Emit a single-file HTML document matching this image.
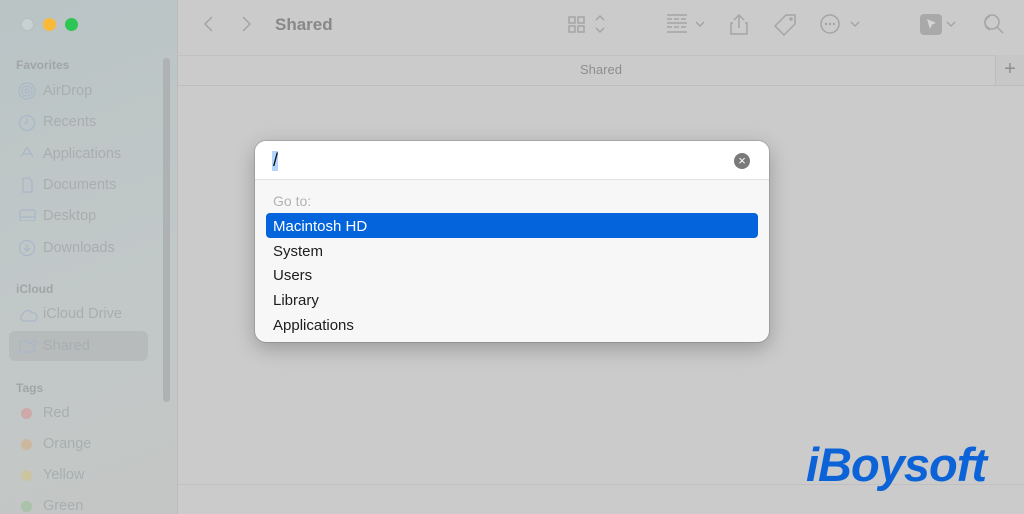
<!DOCTYPE html>
<html><head><meta charset="utf-8"><style>
*{margin:0;padding:0;box-sizing:border-box}
body{width:1024px;height:514px;overflow:hidden;background:#cacbca;font-family:"Liberation Sans",sans-serif;position:relative}
.sb{position:absolute;left:0;top:0;width:177px;height:514px;background:linear-gradient(160deg,#bac4c5,#c2c8c8 60%,#c4c6c5);}
.dot{position:absolute;top:18px;width:13px;height:13px;border-radius:50%}
.hd{position:absolute;left:16px;font-size:12px;font-weight:bold;color:#a0a5a6}
.it{position:absolute;left:43px;font-size:14.5px;color:#a8aeaf}
.ic{position:absolute;left:18px}
.tag{position:absolute;left:21px;width:11px;height:11px;border-radius:50%}
.t{position:absolute;color:#999}
.dlg{position:absolute;left:255px;top:141px;width:514px;height:201px;border-radius:11px;background:#f7f7f7;box-shadow:0 6px 20px rgba(0,0,0,.25),0 0 0 1px rgba(0,0,0,.12);overflow:hidden}
.row{position:absolute;left:18px;font-size:15px;color:#1d1d1d}
</style></head><body>
<div class="sb">
<div class="dot" style="left:21px;background:#c9d2d3;border:1px solid #b5bfc0"></div>
<div class="dot" style="left:43px;background:#f9b93a"></div>
<div class="dot" style="left:65px;background:#2dc553"></div>
<div class="hd" style="top:58px">Favorites</div>
<div class="it" style="top:83px">AirDrop</div>
<div class="it" style="top:114px">Recents</div>
<div class="it" style="top:146px">Applications</div>
<div class="it" style="top:177px">Documents</div>
<div class="it" style="top:208px">Desktop</div>
<div class="it" style="top:240px">Downloads</div>
<svg class="ic" style="top:81px" width="18" height="140" fill="none" stroke="#a9b8c8" stroke-width="1.3">
<circle cx="9" cy="10" r="2"/><circle cx="9" cy="10" r="5"/><circle cx="9" cy="10" r="8"/>
<circle cx="9" cy="42" r="7.5"/><path d="M9 37v5h-3"/>
<path d="M9 66l-6 10M9 66l6 10M4 73h10"/>
<path d="M5 97h6l3 3v11H5z"/>
<rect x="2" y="129" width="15" height="11" rx="1.5"/><path d="M2 136h15"/>
</svg>
<svg class="ic" style="top:238px" width="18" height="18" fill="none" stroke="#a9b8c8" stroke-width="1.3"><circle cx="9" cy="10" r="7.5"/><path d="M9 6v7M6 10l3 3 3-3"/></svg>
<div class="hd" style="top:282px">iCloud</div>
<svg class="ic" style="top:308px" width="20" height="16" fill="none" stroke="#a9b8c8" stroke-width="1.3"><path d="M5 13a4 4 0 0 1 0-7 5 5 0 0 1 9-1 4 4 0 0 1 2 8z"/></svg>
<div class="it" style="top:306px">iCloud Drive</div>
<div style="position:absolute;left:9px;top:331px;width:139px;height:30px;border-radius:6px;background:#b7bbbc"></div>
<svg class="ic" style="top:338px" width="20" height="16" fill="none" stroke="#a9b8c8" stroke-width="1.3"><path d="M2 3h6l2 2h4M2 3v11h14V9"/><circle cx="16" cy="5" r="2.5"/></svg>
<div class="it" style="top:338px">Shared</div>
<div class="hd" style="top:381px">Tags</div>
<div class="tag" style="top:408px;background:#cfa9a9"></div><div class="it" style="top:405px">Red</div>
<div class="tag" style="top:439px;background:#cdb89f"></div><div class="it" style="top:436px">Orange</div>
<div class="tag" style="top:470px;background:#ccc39f"></div><div class="it" style="top:467px">Yellow</div>
<div class="tag" style="top:501px;background:#a9c2a9"></div><div class="it" style="top:498px">Green</div>
<div style="position:absolute;left:163px;top:58px;width:7px;height:344px;border-radius:4px;background:#aeb2b2"></div>
</div>
<div style="position:absolute;left:177px;top:0;width:1px;height:514px;background:#bcbcbc"></div>
<svg style="position:absolute;left:190px;top:10px" width="800" height="30" fill="none" stroke="#a5a5a5" stroke-width="1.5">
<path d="M22 7l-7 7 7 7M53 7l7 7-7 7"/>
<rect x="379" y="7" width="6" height="6"/><rect x="388" y="7" width="6" height="6"/><rect x="379" y="16" width="6" height="6"/><rect x="388" y="16" width="6" height="6"/>
<path d="M406 10l4-4 4 4M406 18l4 4 4-4"/>
<path d="M477 5h20M477 9h5m2 0h5m2 0h5M477 13h20M477 17h5m2 0h5m2 0h5M477 22h20"/>
<path d="M506 12l4 4 4-4"/>
<path d="M544 10l5-5 5 5M549 5v13M543 13h-2v11h16V13h-2"/>
<path d="M596 5h9v9l-11 11-9-9z"/><circle cx="601" cy="9" r="1"/>
<circle cx="640" cy="14" r="9"/><path d="M661 12l4 4 4-4M757 12l4 4 4-4"/>
<circle cx="802" cy="13" r="7"/>
</svg>
<svg style="position:absolute;left:820px;top:14px" width="20" height="20" fill="#a5a5a5"><circle cx="6" cy="10" r="1.2"/><circle cx="10" cy="10" r="1.2"/><circle cx="14" cy="10" r="1.2"/></svg>
<div style="position:absolute;left:920px;top:14px;width:22px;height:21px;border-radius:4px;background:#a9a9a9"></div>
<svg style="position:absolute;left:924px;top:17px" width="14" height="14"><path d="M3 2l9 4-4 1.5L6 12z" fill="#d6d6d6"/></svg>
<svg style="position:absolute;left:980px;top:10px" width="30" height="30" fill="none" stroke="#a5a5a5" stroke-width="1.5"><circle cx="12" cy="12" r="7"/><path d="M17 17l6 6"/></svg>
<div class="t" style="left:275px;top:15px;font-size:17px;font-weight:bold;color:#888">Shared</div>
<div style="position:absolute;left:178px;top:55px;width:846px;height:1px;background:#c2c2c2"></div>
<div class="t" style="left:580px;top:62px;font-size:13px;color:#8e8e8e">Shared</div>
<div style="position:absolute;left:995px;top:55px;width:29px;height:30px;border-left:1px solid #bdbdbd;background:#c7c7c7;color:#8e8e8e;font-size:20px;text-align:center;line-height:29px">+</div>
<div style="position:absolute;left:178px;top:85px;width:846px;height:1px;background:#bdbdbd"></div>
<div style="position:absolute;left:178px;top:484px;width:846px;height:1px;background:#c0c0c0"></div>
<div style="position:absolute;left:806px;top:437px;font-size:47px;font-weight:900;font-style:italic;color:#0c63d7;letter-spacing:-1px;font-family:'Liberation Sans',sans-serif">iBoysoft</div>
<div class="dlg">
<div style="position:absolute;left:0;top:0;width:514px;height:39px;background:#fff;border-bottom:1px solid #e2e2e2"></div>
<div style="position:absolute;left:17px;top:10px;width:6px;height:20px;background:#b3d4fc"></div>
<div style="position:absolute;left:18px;top:9px;font-size:18px;color:#111">/</div>
<div style="position:absolute;left:479px;top:12px;width:16px;height:16px;border-radius:50%;background:#7a7a7a;color:#fff;font-size:13px;line-height:15px;text-align:center">×</div>
<div style="position:absolute;left:18px;top:52px;font-size:14px;color:#b3b3b3">Go to:</div>
<div style="position:absolute;left:11px;top:72px;width:492px;height:25px;border-radius:4px;background:#0364db"></div>
<div class="row" style="top:77px;color:#fff">Macintosh HD</div>
<div class="row" style="top:102px">System</div>
<div class="row" style="top:126px">Users</div>
<div class="row" style="top:151px">Library</div>
<div class="row" style="top:176px">Applications</div>
</div>
</body></html>
